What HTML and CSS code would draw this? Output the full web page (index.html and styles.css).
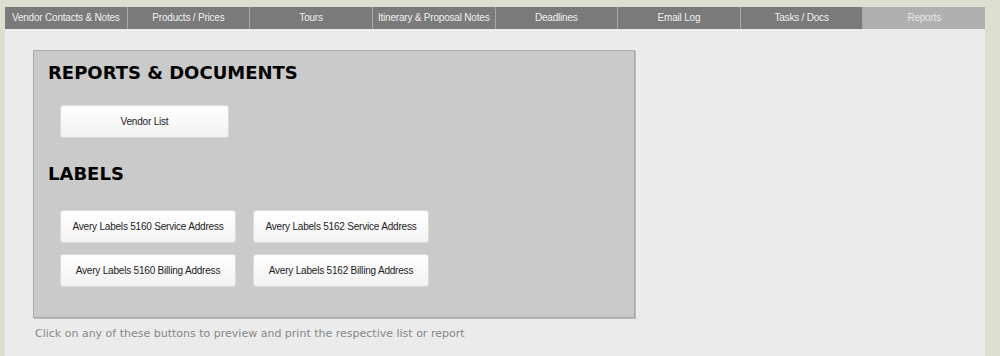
FILE: index.html
```html
<!DOCTYPE html>
<html>
<head>
<meta charset="utf-8">
<link rel="stylesheet" href="styles.css">
</head>
<body>
<div class="wrap">
  <nav class="tabs">
    <div class="tab">Vendor Contacts &amp; Notes</div>
    <div class="tab">Products / Prices</div>
    <div class="tab">Tours</div>
    <div class="tab">Itinerary &amp; Proposal Notes</div>
    <div class="tab">Deadlines</div>
    <div class="tab">Email Log</div>
    <div class="tab">Tasks / Docs</div>
    <div class="tab active">Reports</div>
  </nav>
  <main class="content">
    <section class="panel">
      <h2 class="heading">REPORTS &amp; DOCUMENTS</h2>
      <div class="btn-grid single">
        <button class="btn">Vendor List</button>
      </div>
      <h2 class="heading labels">LABELS</h2>
      <div class="btn-grid labels-grid">
        <button class="btn">Avery Labels 5160 Service Address</button>
        <button class="btn">Avery Labels 5162 Service Address</button>
        <button class="btn">Avery Labels 5160 Billing Address</button>
        <button class="btn">Avery Labels 5162 Billing Address</button>
      </div>
    </section>
    <p class="hint">Click on any of these buttons to preview and print the respective list or report</p>
  </main>
</div>
</body>
</html>
```
FILE: styles.css
```css
html, body {
  margin: 0;
  padding: 0;
  background: #dcdecf;
  height: 356px;
  overflow: hidden;
}
.wrap {
  margin: 7px 0 0 5px;
  width: 980px;
  height: 349px;
  background: #ebebeb;
  display: flex;
  flex-direction: column;
}
.tabs {
  display: flex;
  height: 22px;
  background: #7a7a7a;
}
.tab {
  flex: 1;
  text-align: center;
  line-height: 22px;
  font-family: "Liberation Sans", Arial, sans-serif;
  font-size: 10px;
  letter-spacing: -0.2px;
  color: #f0f0f0;
  border-left: 1px solid #a8a8a8;
  white-space: nowrap;
}
.tab:first-child { border-left: none; }
.tab.active {
  background: #b0b0b0;
  color: #e8e8e8;
}
.content {
  padding: 21px 0 0 28px;
}
.panel {
  box-sizing: border-box;
  width: 602px;
  height: 268px;
  background: #cacaca;
  border: 1px solid #a9a9a9;
  box-shadow: 1px 1px 0 #bdbdbd;
  padding: 10px 0 0 14px;
}
.heading {
  margin: 0;
  font-family: "DejaVu Sans", Verdana, sans-serif;
  font-weight: bold;
  font-size: 18px;
  line-height: 24px;
  color: #000;
}
.heading.labels {
  margin-top: 24px;
}
.btn-grid {
  display: grid;
  grid-template-columns: 176px 176px;
  column-gap: 17px;
  row-gap: 11px;
  margin: 24px 0 0 12px;
}
.btn-grid.single {
  grid-template-columns: 169px;
  margin-top: 20px;
}
.btn {
  height: 33px;
  padding: 0;
  background: linear-gradient(#ffffff, #f2f2f2);
  border: 1px solid #dadada;
  border-radius: 3px;
  font-family: "Liberation Sans", Arial, sans-serif;
  font-size: 10px;
  letter-spacing: -0.2px;
  color: #222;
}
.hint {
  margin: 9px 0 0 2px;
  font-family: "DejaVu Sans", Verdana, sans-serif;
  font-size: 11px;
  color: #888;
}
```
